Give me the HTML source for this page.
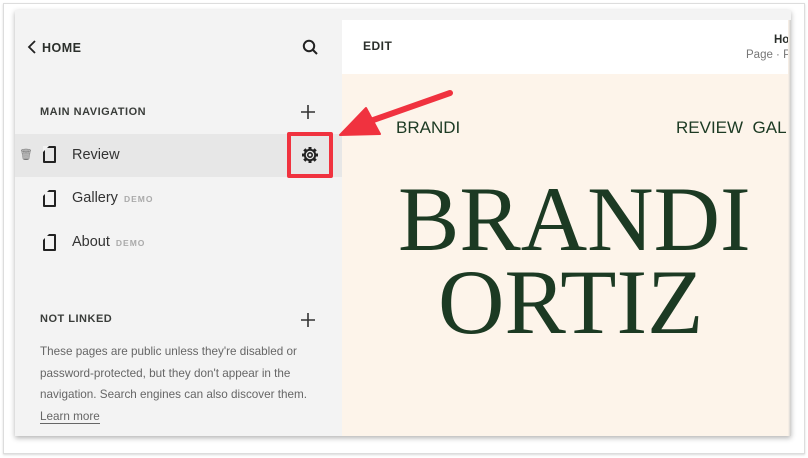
<!DOCTYPE html>
<html><head><style>
*{margin:0;padding:0;box-sizing:border-box}
body{width:808px;height:458px;background:#fff;position:relative;overflow:hidden;font-family:"Liberation Sans",sans-serif}
.frame{position:absolute;left:3px;top:3px;width:802px;height:451px;border:1px solid #ddd;box-shadow:0 1px 2px rgba(0,0,0,.15)}
.card{position:absolute;left:15px;top:10px;width:776px;height:426px;background:#f3f3f3;box-shadow:0 2px 5px rgba(0,0,0,.3);overflow:hidden}
.right{position:absolute;left:327px;top:10px;width:449px;height:416px;background:#fdf4ea}
.hdr{position:absolute;left:0;top:0;width:449px;height:54px;background:#fff}
.t{position:absolute;color:#2b2f2b;white-space:nowrap}
.sec{font-size:11px;font-weight:bold;letter-spacing:.5px;color:#3a3d3a}
.item{font-size:14.5px;color:#333}
.demo{font-size:8.5px;font-weight:bold;letter-spacing:1px;color:#aaa;margin-left:6px}
.pg{position:absolute;width:13px;height:17px;border:2px solid #222;border-radius:1px}
.pg:before{content:"";position:absolute;left:-2px;top:-2px;width:0;height:0;border-top:6px solid #f3f3f3;border-right:6px solid transparent}
.p{font-size:11.7px;color:#666;line-height:21.5px}
.serif{font-family:"Liberation Serif",serif;color:#1c3a23;font-size:92px;position:absolute;line-height:82px}
</style></head><body>
<div class="frame"></div>
<div class="card">
 <div class="t" style="left:12px;top:30px;font-size:12.5px;font-weight:bold;letter-spacing:.5px">
  <svg width="11" height="14" style="vertical-align:-2px;margin-right:4px"><path d="M8 1 L2 7 L8 13" fill="none" stroke="#222" stroke-width="1.8"/></svg>HOME</div>
 <svg style="position:absolute;left:287px;top:29px" width="16" height="16"><circle cx="7" cy="7" r="5.2" fill="none" stroke="#222" stroke-width="2"/><path d="M11 11 L15 15" stroke="#222" stroke-width="2"/></svg>
 <div class="t sec" style="left:25px;top:96px">MAIN NAVIGATION</div>
 <svg style="position:absolute;left:285px;top:94px" width="16" height="16"><path d="M8 1V15M1 8H15" stroke="#333" stroke-width="1.6"/></svg>
 <div style="position:absolute;left:0;top:124px;width:327px;height:43px;background:#e7e7e7"></div>
 <div class="t" style="left:4px;top:138px;font-size:11px;color:#777">🗑</div>
 <div class="pg" style="left:28px;top:136px"></div>
 <div class="t item" style="left:57px;top:137px">Review</div>
 <div class="pg" style="left:28px;top:180px"></div>
 <div class="t item" style="left:57px;top:180px">Gallery<span class="demo">DEMO</span></div>
 <div class="pg" style="left:28px;top:224px"></div>
 <div class="t item" style="left:57px;top:224px">About<span class="demo">DEMO</span></div>
 <div style="position:absolute;left:272px;top:122px;width:46px;height:46px;border:4px solid #f0323f;border-radius:2px"></div>
 <svg style="position:absolute;left:286px;top:136px" width="18" height="18" viewBox="0 0 18 18">
  <g stroke="#222" stroke-width="3" stroke-linecap="butt">
   <path d="M9 1V17M1 9H17M3.3 3.3L14.7 14.7M14.7 3.3L3.3 14.7"/>
  </g>
  <circle cx="9" cy="9" r="5.2" fill="#e7e7e7" stroke="#222" stroke-width="2"/>
  <circle cx="9" cy="9" r="2.2" fill="#e7e7e7" stroke="#222" stroke-width="1.6"/>
 </svg>
 <div class="t sec" style="left:25px;top:303px">NOT LINKED</div>
 <svg style="position:absolute;left:285px;top:302px" width="16" height="16"><path d="M8 1V15M1 8H15" stroke="#333" stroke-width="1.6"/></svg>
 <div class="t p" style="left:25px;top:331px">These pages are public unless they're disabled or<br>password-protected, but they don't appear in the<br>navigation. Search engines can also discover them.<br><span style="border-bottom:1px solid #666">Learn more</span></div>
 <div class="right">
  <div class="hdr">
   <div class="t" style="left:21px;top:19px;font-size:12px;font-weight:bold;letter-spacing:.5px">EDIT</div>
   <div class="t" style="left:432px;top:14px;font-size:11.5px;font-weight:bold">Ho</div>
   <div class="t" style="left:404px;top:29px;font-size:11.5px;color:#777">Page · P</div>
  </div>
  <div class="t" style="left:54px;top:98px;font-size:17px;color:#1c3a23">BRANDI</div>
  <div class="t" style="left:334px;top:98px;font-size:17px;color:#1c3a23">REVIEW&nbsp;&nbsp;GAL</div>
  <div class="serif" style="left:56px;top:158px">BRANDI</div>
  <div class="serif" style="left:96px;top:241px">ORTIZ</div>
  <div style="position:absolute;right:0;top:0;width:3px;height:416px;background:linear-gradient(90deg,#fdf4ea,#ccc)"></div>
 </div>
</div>
<svg style="position:absolute;left:0;top:0" width="808" height="458">
 <path d="M450 93 L362 124" stroke="#f0323f" stroke-width="6" stroke-linecap="round"/>
 <path d="M340 135 L366 108 L380 134 Z" fill="#f0323f" stroke="#f0323f" stroke-width="2" stroke-linejoin="round"/>
</svg>
</body></html>
